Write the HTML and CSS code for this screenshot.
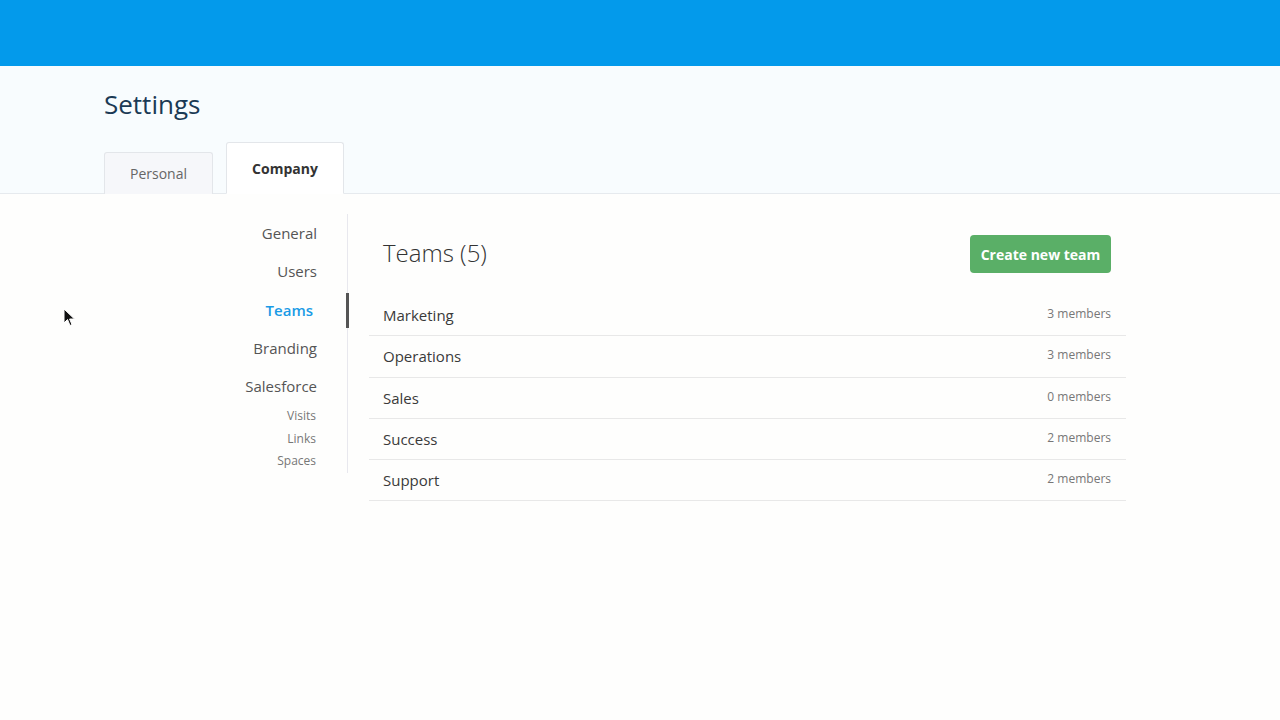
FILE: index.html
```html
<!DOCTYPE html>
<html>
<head>
<title>Settings</title>
<meta charset="utf-8">
<link rel="stylesheet" href="styles.css">
</head>
<body>
<div class="topbar"></div>
<div class="header">
	<h1>Settings</h1>
	<div class="tabs">
		<div class="tab">Personal</div>
		<div class="tab active">Company</div>
	</div>
</div>
<div class="page">
	<ul class="sidenav">
		<li>General</li>
		<li>Users</li>
		<li class="active">Teams</li>
		<li>Branding</li>
		<li>Salesforce</li>
		<li class="sub">Visits</li>
		<li class="sub">Links</li>
		<li class="sub">Spaces</li>
	</ul>
	<div class="content">
		<div class="content-head">
			<h2>Teams (5)</h2>
			<button class="btn-create">Create new team</button>
		</div>
		<ul class="teams">
			<li><span class="name">Marketing</span><span class="count">3 members</span></li>
			<li><span class="name">Operations</span><span class="count">3 members</span></li>
			<li><span class="name">Sales</span><span class="count">0 members</span></li>
			<li><span class="name">Success</span><span class="count">2 members</span></li>
			<li><span class="name">Support</span><span class="count">2 members</span></li>
		</ul>
	</div>
</div>
<svg class="cursor" width="14" height="20" viewBox="0 0 14 20">
	<path d="M1 1 L1 15 L4.5 11.5 L7 17.5 L9 16.6 L6.6 11 L11.5 11 Z" fill="#111" stroke="#fff" stroke-width="1"/>
</svg>
</body>
</html>
```

FILE: styles.css
```css
body {
	margin: 0;
	font-family: "Open Sans", sans-serif;
	color: #333;
	background-color: #fefefd;
}
ul {
	margin: 0;
	padding: 0;
	list-style: none;
}
.topbar {
	height: 66px;
	background-color: #039aeb;
}
.header {
	height: 128px;
	background-color: #f8fcfe;
	border-bottom: 1px solid #e6eaee;
	padding-left: 104px;
	box-sizing: border-box;
	display: flex;
	flex-direction: column;
	justify-content: space-between;
}
h1 {
	margin: 20px 0 0 0;
	font-size: 26px;
	font-weight: 400;
	line-height: 36px;
	color: #1b3a55;
}
.tabs {
	display: flex;
	align-items: flex-end;
	gap: 13px;
	margin-bottom: -1px;
}
.tab {
	width: 109px;
	height: 42px;
	box-sizing: border-box;
	display: flex;
	align-items: center;
	justify-content: center;
	font-size: 14px;
	color: #666;
	background-color: #f6f7fa;
	border: 1px solid #e3e6ea;
	border-bottom: none;
	border-radius: 3px 3px 0 0;
}
.tab.active {
	width: 118px;
	height: 52px;
	font-weight: 700;
	color: #333;
	background-color: #fff;
	border-bottom: 1px solid #fff;
}
.page {
	display: flex;
	align-items: flex-start;
	padding-top: 20px;
}
.sidenav {
	width: 348px;
	box-sizing: border-box;
	padding-right: 30px;
	border-right: 1px solid #e8e8ee;
	text-align: right;
}
.sidenav li {
	position: relative;
	height: 38.3px;
	line-height: 38px;
	font-size: 15px;
	color: #555;
}
.sidenav li.active {
	color: #1a9be6;
	font-weight: 600;
	padding-right: 4px;
}
.sidenav li.active::after {
	content: "";
	position: absolute;
	right: -32px;
	top: 2px;
	width: 3px;
	height: 35px;
	background-color: #555;
}
.sidenav li.sub {
	height: 22.5px;
	line-height: 22px;
	font-size: 12px;
	color: #777;
	padding-right: 1px;
}
.content {
	width: 757px;
	margin-left: 21px;
}
.content-head {
	display: flex;
	align-items: center;
	justify-content: space-between;
	padding: 21px 15px 0 14px;
}
h2 {
	margin: 0 0 4px 0;
	font-size: 24px;
	font-weight: 300;
	color: #333;
}
.btn-create {
	width: 141px;
	height: 38px;
	border: none;
	border-radius: 4px;
	background-color: #5aaf67;
	color: #fff;
	font-family: inherit;
	font-size: 14px;
	font-weight: 700;
}
.teams {
	margin-top: 22px;
}
.teams li {
	height: 41.3px;
	box-sizing: border-box;
	border-bottom: 1px solid #e8e8e8;
	display: flex;
	align-items: center;
	justify-content: space-between;
	padding: 0 15px 0 14px;
}
.name {
	font-size: 15px;
	color: #3a3a3a;
}
.count {
	font-size: 12px;
	color: #777;
	margin-bottom: 3px;
}
.cursor {
	position: absolute;
	left: 63px;
	top: 308px;
}
```
